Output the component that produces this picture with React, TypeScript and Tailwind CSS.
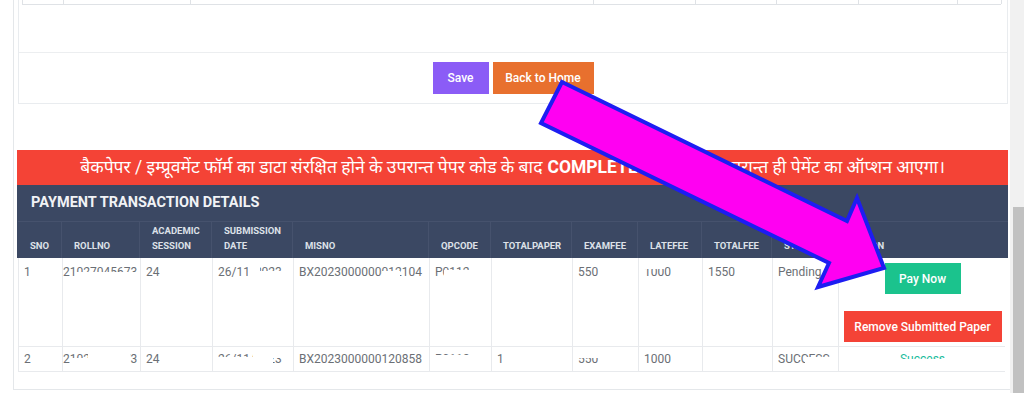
import React from "react";

const topCols = "grid-cols-[41px_127px_403px_102px_81px_82px_99px_44px]";

const headers: string[][] = [
  ["SNO"],
  ["ROLLNO"],
  ["ACADEMIC", "SESSION"],
  ["SUBMISSION", "DATE"],
  ["MISNO"],
  ["QPCODE"],
  ["TOTALPAPER"],
  ["EXAMFEE"],
  ["LATEFEE"],
  ["TOTALFEE"],
  ["STATUS"],
  ["ACTION"],
];

const cols =
  "grid grid-cols-[44px_78px_72px_81px_136px_62px_81px_66px_64px_70px_66px_167px]";

function Cell({ children, last }: { children?: React.ReactNode; last?: boolean }) {
  return (
    <div
      className={
        "relative overflow-hidden whitespace-nowrap pl-[5px] " +
        (last ? "" : "border-r border-[#e8eaed]")
      }
    >
      {children}
    </div>
  );
}

// white patch that hides part of a value, as in the screenshot
function Patch({ className }: { className: string }) {
  return <span className={"absolute bg-white " + className} />;
}

function Arrow() {
  return (
    <svg
      className="pointer-events-none absolute left-0 top-0"
      width="1024"
      height="393"
      viewBox="0 0 1024 393"
    >
      <polygon
        points="562,82 847,221 857,198 884,268 818,287 829,263 541,123"
        fill="#ff00f2"
        stroke="#1d1df2"
        strokeWidth="4"
        strokeLinejoin="miter"
      />
    </svg>
  );
}

export default function App() {
  return (
    <div className="relative flex h-[393px] w-[1024px] overflow-hidden bg-white font-['Roboto','Noto_Sans',sans-serif] text-[#6b6f75]">
      <div className="w-[1010px] shrink-0">
        <div className="ml-[13px] h-[390px] border-b border-l border-[#e4e7ea] pl-[4px] pr-[2px]">
          {/* Upper card (scrolled) */}
          <div className="border-x border-b border-[#e9ecef]">
            <div className="h-[53px] border-b border-[#eceef0] pl-[3px]">
              <div className={"grid h-[5px] w-[979px] border-b border-l border-[#dfe2e6] " + topCols}>
                {Array.from({ length: 8 }).map((_, i) => (
                  <div key={i} className="border-r border-[#dfe2e6]" />
                ))}
              </div>
            </div>
            <div className="flex h-[50px] justify-center gap-[4px] pt-[9px]">
              <button className="h-[32px] w-[56px] bg-[#8b5cf6] text-[12px] font-medium text-white">
                Save
              </button>
              <button className="h-[32px] w-[101px] bg-[#e8702e] text-[12px] font-medium text-white">
                Back to Home
              </button>
            </div>
          </div>

          {/* Payment section */}
          <div className="mt-[46px] -ml-px">
            <div className="flex h-[35px] items-center justify-center whitespace-nowrap bg-[#f44336] text-[17.5px] text-white">
              बैकपेपर / इम्प्रूवमेंट फॉर्म का डाटा संरक्षित होने के उपरान्त पेपर कोड के बाद{" "}
              <b className="mx-[5px] font-bold">COMPLETED</b> हो जाने के उपरान्त ही पेमेंट का ऑप्शन आएगा।
            </div>
            <div className="bg-[#3b4863]">
              <div className="flex h-[36px] items-center pl-[14px] text-[14.5px] font-bold text-[#f1f3f6]">
                PAYMENT TRANSACTION DETAILS
              </div>
              <div className={cols + " ml-px h-[37px] border-t border-[#46526d]"}>
                {headers.map((h, i) => (
                  <div
                    key={i}
                    className={
                      "flex flex-col justify-end pb-[5px] pl-[12px] text-[9.5px] font-bold leading-[15px] text-[#dde1e8] " +
                      (i < headers.length - 1 ? "border-r border-[#46526d]" : "")
                    }
                  >
                    {h.map((l) => (
                      <span key={l}>{l}</span>
                    ))}
                  </div>
                ))}
              </div>
            </div>

            {/* Rows */}
            <div className="ml-px w-[987px] border-l border-[#e8eaed] text-[12px] leading-[14px]">
              <div className={cols + " h-[89px] border-b border-[#e8eaed]"}>
                <Cell><div className="pt-[7px]">1</div></Cell>
                <Cell>
                  <div className="pt-[7px] -ml-[5px]">21027045673</div>
                  <Patch className="left-[12px] top-[14px] h-[8px] w-[70px]" />
                </Cell>
                <Cell><div className="pt-[7px]">24</div></Cell>
                <Cell>
                  <div className="pt-[7px]">26/11/2023</div>
                  <Patch className="left-[35px] top-[7px] h-[6px] w-[12px]" />
                  <Patch className="left-[35px] top-[13px] h-[10px] w-[46px]" />
                </Cell>
                <Cell>
                  <div className="pt-[7px]">BX2023000000012104</div>
                  <Patch className="left-[88px] top-[13px] h-[10px] w-[18px]" />
                </Cell>
                <Cell>
                  <div className="pt-[7px]">P0112</div>
                  <Patch className="left-[14px] top-[12px] h-[10px] w-[48px]" />
                </Cell>
                <Cell />
                <Cell><div className="pt-[7px]">550</div></Cell>
                <Cell>
                  <div className="pt-[7px]">1000</div>
                  <Patch className="left-[4px] top-[5px] h-[6px] w-[22px]" />
                </Cell>
                <Cell>
                  <div className="pt-[7px]">1550</div>
                  <Patch className="left-[4px] top-[18px] h-[5px] w-[30px]" />
                </Cell>
                <Cell><div className="pt-[7px]">Pending</div></Cell>
                <Cell last>
                  <div className="-ml-[5px] flex flex-col items-center pt-[5px]">
                    <button className="h-[31px] w-[76px] bg-[#1bc38d] text-[12px] font-medium text-white">
                      Pay Now
                    </button>
                    <button className="mt-[17px] h-[31px] w-[158px] bg-[#f44336] text-[12px] font-medium text-white">
                      Remove Submitted Paper
                    </button>
                  </div>
                </Cell>
              </div>
              <div className={cols + " h-[25px] border-b border-[#e8eaed]"}>
                <Cell><div className="pt-[5px]">2</div></Cell>
                <Cell>
                  <div className="pt-[5px] -ml-[5px]">21027045673</div>
                  <Patch className="left-[25px] top-[4px] h-[15px] w-[42px]" />
                  <Patch className="left-[8px] top-[11px] h-[8px] w-[20px]" />
                </Cell>
                <Cell><div className="pt-[5px]">24</div></Cell>
                <Cell>
                  <div className="pt-[5px]">26/11/2023</div>
                  <Patch className="left-0 top-[10px] h-[10px] w-[60px]" />
                  <Patch className="left-[40px] top-[3px] h-[8px] w-[30px]" />
                </Cell>
                <Cell><div className="pt-[5px]">BX2023000000120858</div></Cell>
                <Cell>
                  <div className="pt-[5px]">P0112</div>
                  <Patch className="left-0 top-[8px] h-[12px] w-[62px]" />
                </Cell>
                <Cell><div className="pt-[5px]">1</div></Cell>
                <Cell>
                  <div className="pt-[5px]">550</div>
                  <Patch className="left-0 top-[2px] h-[9px] w-[40px]" />
                </Cell>
                <Cell><div className="pt-[5px]">1000</div></Cell>
                <Cell />
                <Cell>
                  <div className="pt-[5px]">SUCCESS</div>
                  <Patch className="left-[32px] top-[10px] h-[10px] w-[34px]" />
                </Cell>
                <Cell last>
                  <div className="-ml-[5px] pt-[5px] text-center text-[#1abc9c]">Success</div>
                  <Patch className="left-0 top-[12px] h-[10px] w-[167px]" />
                </Cell>
              </div>
            </div>
          </div>
        </div>
      </div>

      {/* Scrollbar */}
      <div className="h-full w-[14px] shrink-0 bg-[#f1f1f1] pl-[3px] pt-[207px]">
        <div className="h-full bg-[#c1c1c1]" />
      </div>

      <Arrow />
    </div>
  );
}
